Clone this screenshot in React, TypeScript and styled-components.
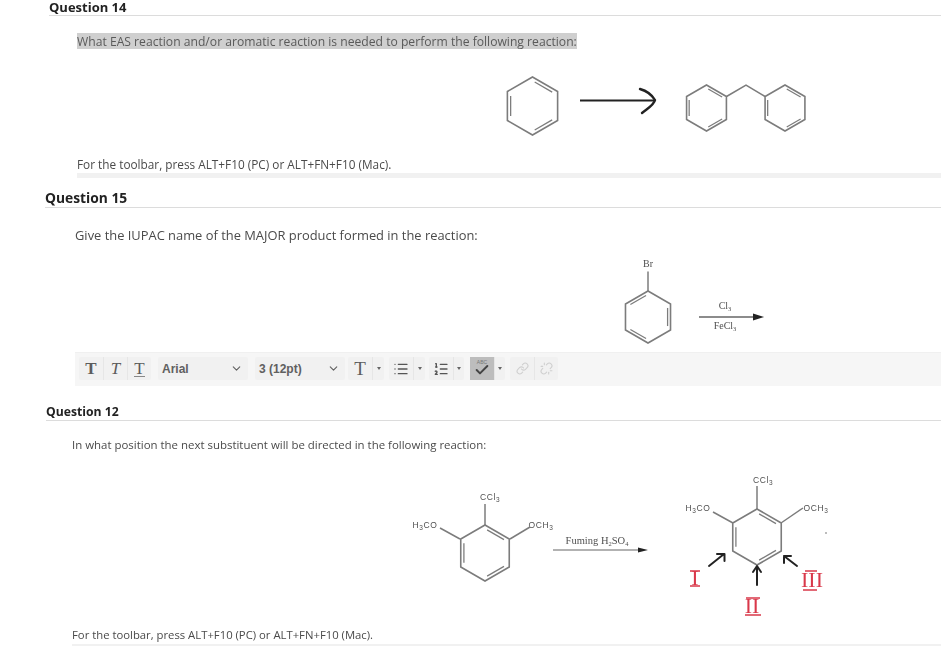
import React from "react";
import styled, { createGlobalStyle } from "styled-components";
import { ChevronDown, List, ListOrdered, Check, Link, Unlink } from "lucide-react";

const GlobalStyle = createGlobalStyle`
    html, body {
        margin: 0;
        padding: 0;
        background: #fff;
    }
    body {
        font-family: "Open Sans", "Liberation Sans", sans-serif;
        overflow: hidden;
    }
`

const Page = styled.div`
    width: 945px;
    height: 646px;
    overflow: hidden;
    display: flex;
    flex-direction: column;
    filter: blur(0.45px);
`

const Heading = styled.h2<{ $left: number; $top: number; $height: number; $size?: number }>`
    margin: ${(p) => p.$top}px 4px 0 ${(p) => p.$left}px;
    height: ${(p) => p.$height}px;
    box-sizing: border-box;
    flex: none;
    font-size: ${(p) => p.$size || 13}px;
    line-height: ${(p) => p.$height - 2}px;
    font-weight: 700;
    color: #222;
    border-bottom: 1px solid #dcdcdc;
`

const Line = styled.p<{ $left: number; $top: number; $size: number; $color?: string }>`
    margin: ${(p) => p.$top}px 0 0 ${(p) => p.$left}px;
    height: 16px;
    flex: none;
    font-size: ${(p) => p.$size}px;
    line-height: 16px;
    color: ${(p) => p.$color || "#4a4a4a"};
    white-space: nowrap;
`

const Highlight = styled.span`
    display: inline-block;
    height: 16px;
    box-sizing: border-box;
    padding-top: 2px;
    line-height: 14px;
    background: #cfcfcf;
    color: #5a5a5a;
    vertical-align: top;
`

const FaintBar = styled.div<{ $left: number; $top: number; $height: number }>`
    margin: ${(p) => p.$top}px 4px 0 ${(p) => p.$left}px;
    height: ${(p) => p.$height}px;
    flex: none;
    background: #f1f1f1;
`

const Drawing = styled.svg<{ $left: number; $top: number }>`
    display: block;
    flex: none;
    margin: ${(p) => p.$top}px 0 0 ${(p) => p.$left}px;
`

const DrawingRow = styled.div<{ $top: number; $height: number }>`
    display: flex;
    flex: none;
    margin-top: ${(p) => p.$top}px;
    height: ${(p) => p.$height}px;
`

const Toolbar = styled.div`
    display: flex;
    flex: none;
    align-items: center;
    margin: 0 4px 0 75px;
    height: 34px;
    padding: 0 0 2px 4px;
    background: #f6f6f6;
    border-top: 1px solid #f0f0f0;
    box-sizing: border-box;
    color: #555;
`

const Group = styled.div<{ $gap?: number }>`
    display: flex;
    height: 23px;
    margin-right: ${(p) => p.$gap ?? 5}px;
    background: #f1f1f1;
    border-radius: 2px;
`

const ToolButton = styled.div<{ $width?: number; $active?: boolean; $dim?: boolean }>`
    display: flex;
    flex-direction: column;
    align-items: center;
    justify-content: center;
    box-sizing: border-box;
    width: ${(p) => p.$width || 24}px;
    height: 23px;
    background: ${(p) => (p.$active ? "#bdbdbd" : "transparent")};
    color: ${(p) => (p.$dim ? "#cfcfcf" : "#555")};
    & + & {
        border-left: 1px solid #e6e6e6;
    }
`

const Glyph = styled.span<{ $italic?: boolean; $under?: boolean; $bold?: boolean; $size?: number }>`
    font-family: "Liberation Serif", serif;
    font-size: ${(p) => p.$size || 17}px;
    line-height: 15px;
    font-weight: ${(p) => (p.$bold ? 700 : 400)};
    font-style: ${(p) => (p.$italic ? "italic" : "normal")};
    color: #5c5c5c;
    border-bottom: ${(p) => (p.$under ? "1px solid #888" : "none")};
`

const SpellTag = styled.span`
    font-family: "Liberation Sans", sans-serif;
    font-size: 5px;
    line-height: 5px;
    color: #777;
    margin-bottom: -3px;
`

const Caret = styled.i`
    width: 0;
    height: 0;
    border-left: 2.5px solid transparent;
    border-right: 2.5px solid transparent;
    border-top: 3px solid #666;
`

const Select = styled.div<{ $gap: number }>`
    display: flex;
    align-items: center;
    justify-content: space-between;
    width: 90px;
    height: 23px;
    margin-right: ${(p) => p.$gap}px;
    padding: 0 5px 0 4px;
    box-sizing: border-box;
    background: #f1f1f1;
    border-radius: 2px;
    font-family: "Liberation Sans", Arial, sans-serif;
    font-size: 12px;
    font-weight: 700;
    color: #606060;
`

type Side = 0 | 1 | 2 | 3 | 4 | 5

// pointy-top ring, sides count clockwise from the top vertex
const Ring = ({ cx, cy, r, doubles, color = "#7c7c7c", width = 1.6 }: { cx: number; cy: number; r: number; doubles: Side[]; color?: string; width?: number }) => {
    const pts = Array.from({ length: 6 }, (_, i) => {
        const a = (Math.PI / 3) * i - Math.PI / 2
        return [cx + r * Math.cos(a), cy + r * Math.sin(a)]
    })
    const inner = (k: number) => {
        const a = pts[k]
        const b = pts[(k + 1) % 6]
        const s = 0.87
        const t = 0.1
        const ax = cx + (a[0] - cx) * s
        const ay = cy + (a[1] - cy) * s
        const bx = cx + (b[0] - cx) * s
        const by = cy + (b[1] - cy) * s
        return { x1: ax + (bx - ax) * t, y1: ay + (by - ay) * t, x2: bx + (ax - bx) * t, y2: by + (ay - by) * t }
    }
    return (
        <g stroke={color} strokeWidth={width} fill="none">
            <polygon points={pts.map((p) => p.join(",")).join(" ")} />
            {doubles.map((k) => <line key={k} {...inner(k)} strokeWidth={width * 0.8} />)}
        </g>
    )
}

const Bond = ({ d, color = "#7c7c7c", width = 1.5 }: { d: string; color?: string; width?: number }) => (
    <path d={d} stroke={color} strokeWidth={width} fill="none" />
)

const Label = ({ x, y, size = 9, anchor = "middle", family = "Liberation Sans", spacing = 0, children }: { x: number; y: number; size?: number; anchor?: string; family?: string; spacing?: number; children: React.ReactNode }) => (
    <text x={x} y={y} fontSize={size} textAnchor={anchor} fontFamily={`"${family}", sans-serif`} letterSpacing={spacing} fill="#505050">{children}</text>
)

const Sub = ({ children }: { children: React.ReactNode }) => <tspan fontSize="6.5" dy="2">{children}</tspan>

const InkArrow = ({ d, width = 2 }: { d: string; width?: number }) => <path d={d} stroke="#222" strokeWidth={width} strokeLinecap="round" strokeLinejoin="round" fill="none" />

const RedBars = ({ d }: { d: string }) => <path d={d} stroke="#d9384a" strokeWidth={1.3} fill="none" />

const RedMark = ({ x, y, children }: { x: number; y: number; children: string }) => (
    <text x={x} y={y} fontSize={22} textAnchor="middle" fontFamily={'"Liberation Serif", serif'} fill="#d9384a">{children}</text>
)

const Question14 = () => (
    <>
        <Heading $left={49} $top={0} $height={16}>Question 14</Heading>
        <Line $left={77} $top={17} $size={12.15}><Highlight>What EAS reaction and/or aromatic reaction is needed to perform the following reaction:</Highlight></Line>
        <Drawing $left={490} $top={21} width={330} height={70} viewBox="490 70 330 70">
            <Ring cx={532.5} cy={106} r={29} doubles={[0, 2, 4]} />
            <path d="M580 100.5H654" stroke="#222" strokeWidth={1.8} />
            <InkArrow d="M640 89C647 91 652 95 655 100C654 105 648 108 642 113" width={2.4} />
            <Ring cx={706.5} cy={108} r={23} doubles={[0, 2, 4]} />
            <Ring cx={785} cy={108} r={23} doubles={[0, 2, 4]} />
            <Bond d="M726.5 96.5L746 85L765 96.5" />
        </Drawing>
        <Line $left={77} $top={16} $size={11.8}>For the toolbar, press ALT+F10 (PC) or ALT+FN+F10 (Mac).</Line>
        <FaintBar $left={77} $top={1} $height={5} />
    </>
)

const Question15 = () => (
    <>
        <Heading $left={45} $top={11} $height={19} $size={13.8}>Question 15</Heading>
        <Line $left={75} $top={19} $size={12.9}>Give the IUPAC name of the MAJOR product formed in the reaction:</Line>
        <DrawingRow $top={14} $height={95}>
            <Drawing $left={610} $top={0} width={170} height={95} viewBox="610 257 170 95">
                <Label x={648} y={267} size={10} family="Liberation Serif">Br</Label>
                <Bond d="M648 271.5V291" />
                <Ring cx={648} cy={317} r={26} doubles={[5, 1, 3]} />
                <Label x={725} y={309} size={10} family="Liberation Serif">Cl<Sub>3</Sub></Label>
                <path d="M699 317H755" stroke="#666" strokeWidth={1.3} />
                <path d="M753 313.5L764 317L753 320.5Z" fill="#222" />
                <Label x={725} y={329} size={10} family="Liberation Serif">FeCl<Sub>3</Sub></Label>
            </Drawing>
        </DrawingRow>
        <Toolbar>
            <Group $gap={7}>
                <ToolButton><Glyph $bold>T</Glyph></ToolButton>
                <ToolButton><Glyph $italic>T</Glyph></ToolButton>
                <ToolButton><Glyph $under>T</Glyph></ToolButton>
            </Group>
            <Select $gap={7}>Arial<ChevronDown size={13} /></Select>
            <Select $gap={3}>3 (12pt)<ChevronDown size={13} /></Select>
            <Group>
                <ToolButton><Glyph $size={19}>T</Glyph></ToolButton>
                <ToolButton $width={12}><Caret /></ToolButton>
            </Group>
            <Group $gap={4}>
                <ToolButton><List size={16} /></ToolButton>
                <ToolButton $width={12}><Caret /></ToolButton>
            </Group>
            <Group $gap={6}>
                <ToolButton><ListOrdered size={16} /></ToolButton>
                <ToolButton $width={11}><Caret /></ToolButton>
            </Group>
            <Group>
                <ToolButton $active><SpellTag>ABC</SpellTag><Check size={16} strokeWidth={3} color="#444" /></ToolButton>
                <ToolButton $width={11}><Caret /></ToolButton>
            </Group>
            <Group>
                <ToolButton $dim><Link size={13} /></ToolButton>
                <ToolButton $dim><Unlink size={13} /></ToolButton>
            </Group>
        </Toolbar>
    </>
)

const Question12 = () => (
    <>
        <Heading $left={46} $top={19} $height={16} $size={12.2}>Question 12</Heading>
        <Line $left={72} $top={16} $size={11.45}>In what position the next substituent will be directed in the following reaction:</Line>
        <DrawingRow $top={17} $height={150}>
            <Drawing $left={410} $top={0} width={425} height={150} viewBox="410 470 425 150">
                <Label x={490} y={500} size={8.5} spacing={0.6}>CCl<Sub>3</Sub></Label>
                <Bond d="M485 504V525" />
                <Ring cx={485} cy={553} r={28} doubles={[0, 2, 4]} />
                <Label x={425} y={528} size={8.5} spacing={0.6}>H<Sub>3</Sub><tspan dy="-2">CO</tspan></Label>
                <Bond d="M460 539L440 528" />
                <Label x={541} y={528} size={8.5} spacing={0.6}>OCH<Sub>3</Sub></Label>
                <Bond d="M510 539L530 527" />
                <Label x={597} y={544} size={10.5} family="Liberation Serif">Fuming H<Sub>2</Sub><tspan dy="-2">SO</tspan><Sub>4</Sub></Label>
                <path d="M553 550H640" stroke="#666" strokeWidth={1.2} />
                <path d="M638 547.5L648 550L638 552.5Z" fill="#222" />
                <Label x={763} y={483} size={8.5} spacing={0.6}>CCl<Sub>3</Sub></Label>
                <Bond d="M757 486V509" />
                <Ring cx={757} cy={537} r={28} doubles={[0, 2, 4]} />
                <Label x={698} y={511} size={8.5} spacing={0.6}>H<Sub>3</Sub><tspan dy="-2">CO</tspan></Label>
                <Bond d="M733 523L713 512" />
                <Label x={816} y={511} size={8.5} spacing={0.6}>OCH<Sub>3</Sub></Label>
                <Bond d="M781 523L803 508" />
                <circle cx={826} cy={533} r={0.8} fill="#666" />
                <InkArrow d="M709 566L724 554M717 554H724.5V561" />
                <InkArrow d="M757 585V567M753 572L757 566L761 572" />
                <InkArrow d="M797 566L784 556M784 563V556H791" />
                <RedMark x={695} y={585}>I</RedMark>
                <RedBars d="M690 571H700M690 586H700" />
                <RedMark x={752} y={613}>II</RedMark>
                <RedBars d="M746 598H760M745 615H761" />
                <RedMark x={812} y={587}>III</RedMark>
                <RedBars d="M805 571H817M803 590H817" />
            </Drawing>
        </DrawingRow>
        <Line $left={72} $top={7} $size={11.3}>For the toolbar, press ALT+F10 (PC) or ALT+FN+F10 (Mac).</Line>
        <FaintBar $left={72} $top={1} $height={3} />
    </>
)

const App: React.FC = () => (
    <Page>
        <GlobalStyle />
        <Question14 />
        <Question15 />
        <Question12 />
    </Page>
)

export default App
